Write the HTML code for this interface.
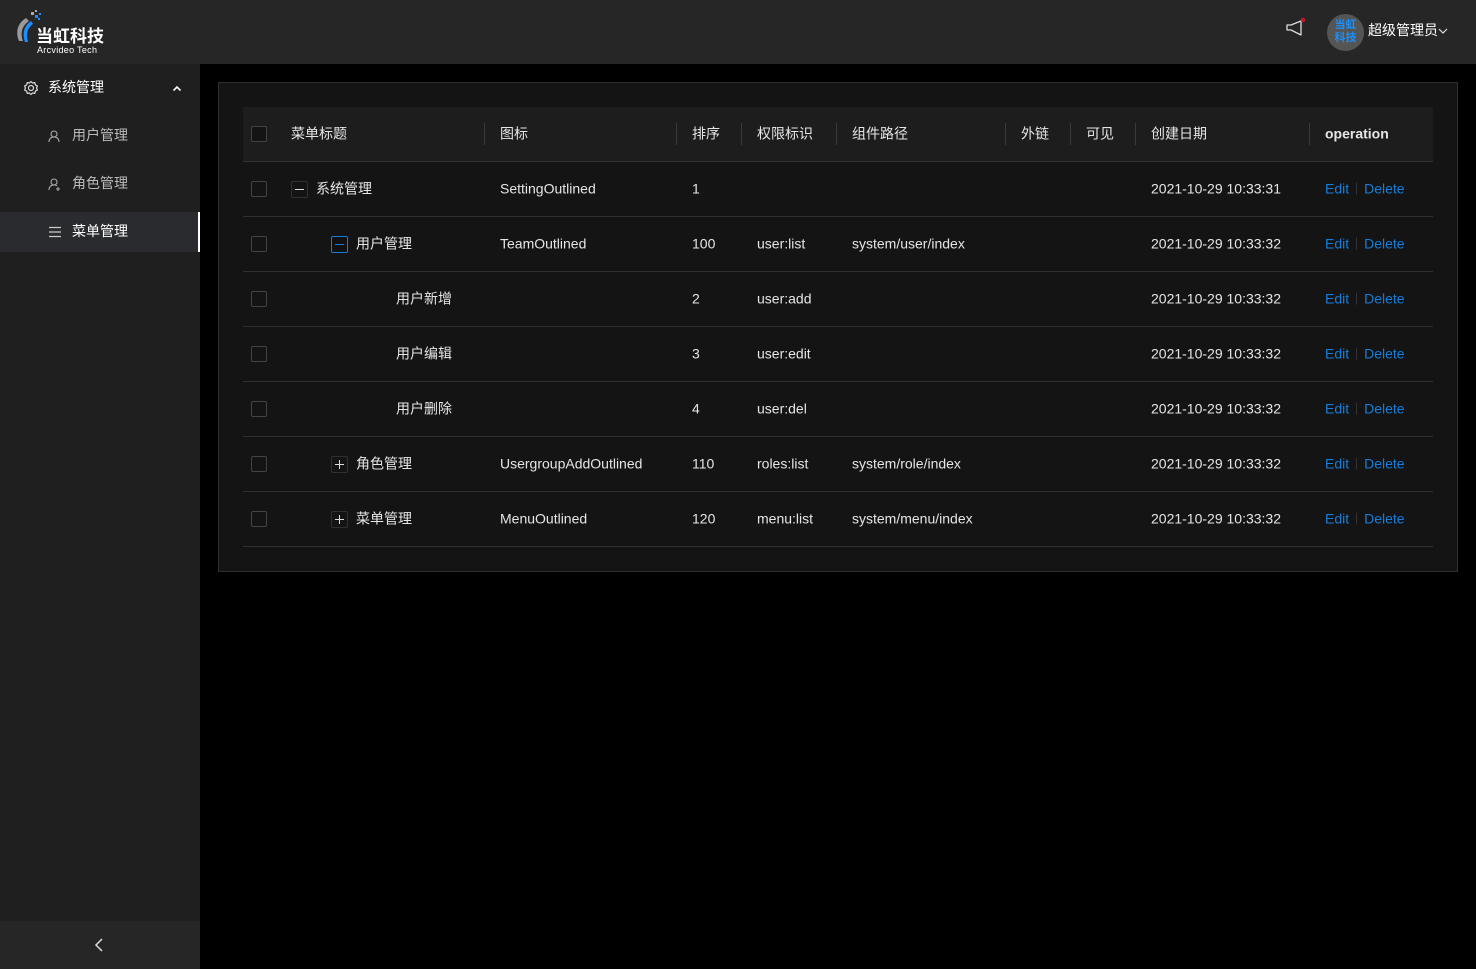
<!DOCTYPE html><html><head><meta charset="utf-8"><style>
*{margin:0;padding:0;box-sizing:border-box}
body{width:1476px;height:969px;background:#000;font-family:"Liberation Sans","Noto Sans CJK SC",sans-serif;font-size:14px;color:#e6e6e6;position:relative;overflow:hidden}
.a{position:absolute;white-space:nowrap;line-height:1.2}
.cb{position:absolute;left:8px;width:16px;height:16px;border:1px solid #434343;border-radius:2px;background:#141414}
.row{position:absolute;left:243px;width:1190px;height:55px;border-bottom:1px solid #303030}
.row .a{top:50%;transform:translateY(-50%)}
.row .cb{top:19px}
.div{position:absolute;top:16px;width:1px;height:22px;background:#3a3a3a}
.lk{color:#177ddc}
.sep{display:inline-block;width:1px;height:12px;background:#333;margin:0 7px;vertical-align:-1px}
.exp{position:absolute;top:19px;width:17px;height:17px;border:1px solid #303030;border-radius:2px;background:#141414}
.exp:before{content:"";position:absolute;left:3px;top:7px;width:9px;height:1px;background:#ddd}
.exp.p:after{content:"";position:absolute;left:7px;top:3px;width:1px;height:9px;background:#ddd}
.exp.b{border-color:#177ddc;background:#111}
.exp.b:before{background:#177ddc}
</style></head><body>
<div class="a" style="left:0;top:0;width:1476px;height:64px;background:#262626"></div>
<svg class="a" style="left:14px;top:8px" width="34" height="40" viewBox="0 0 34 40"><path d="M12 10 C4 15 1 23 5 33 L9 33 C6 25 8 18 15 13Z" fill="#999"/><path d="M17 13 C10 18 8 25 11 34 L14 34 C12 26 13 20 19 16Z" fill="#1890ff"/><rect x="17" y="4" width="3" height="3" fill="#aaa"/><rect x="21" y="7" width="3" height="3" fill="#1890ff"/><rect x="25" y="5" width="2" height="2" fill="#1890ff"/><rect x="21" y="2" width="2" height="2" fill="#aaa"/><rect x="24" y="10" width="2" height="2" fill="#1890ff"/></svg>
<div class="a" style="left:36px;top:27px;font-size:17px;line-height:20px;color:#fff;font-weight:bold">当虹科技</div>
<div class="a" style="left:37px;top:45px;font-size:9px;line-height:10px;color:#fff;letter-spacing:0.3px">Arcvideo Tech</div>
<svg class="a" style="left:1284px;top:16px" width="22" height="22" viewBox="0 0 22 22"><path d="M3 9 L3 14 L7 14 L17 19 L17 5 L7 9Z" fill="none" stroke="#ddd" stroke-width="1.3" stroke-linejoin="round"/><circle cx="19" cy="4" r="2.3" fill="#c0192a"/></svg>
<div class="a" style="left:1327px;top:14px;width:37px;height:37px;border-radius:50%;background:#555;color:#1890ff;font-size:11px;font-weight:bold;text-align:center;line-height:13px;padding-top:5px">当虹<br>科技</div>
<div class="a" style="left:1368px;top:22px;font-size:14px;color:#fff">超级管理员</div>
<svg class="a" style="left:1438px;top:27px" width="10" height="8" viewBox="0 0 10 8"><path d="M1 2 L5 6 L9 2" fill="none" stroke="#ddd" stroke-width="1.2"/></svg>
<div class="a" style="left:0;top:64px;width:200px;height:857px;background:#1f1f1f"></div>
<div class="a" style="left:0;top:921px;width:200px;height:48px;background:#262626"></div>
<svg class="a" style="left:94px;top:938px" width="10" height="14" viewBox="0 0 10 14"><path d="M8 1 L2 7 L8 13" fill="none" stroke="#ddd" stroke-width="1.5"/></svg>
<svg class="a" style="left:23px;top:80px" width="16" height="16" viewBox="0 0 16 16"><circle cx="8" cy="8" r="2.5" fill="none" stroke="#ddd" stroke-width="1.2"/><path d="M8 1.5 L9.5 3 L11.8 2.6 L12.3 4.8 L14.4 6 L13.5 8 L14.4 10 L12.3 11.2 L11.8 13.4 L9.5 13 L8 14.5 L6.5 13 L4.2 13.4 L3.7 11.2 L1.6 10 L2.5 8 L1.6 6 L3.7 4.8 L4.2 2.6 L6.5 3Z" fill="none" stroke="#ddd" stroke-width="1.2" stroke-linejoin="round"/></svg>
<div class="a" style="left:48px;top:79px;color:#fff">系统管理</div>
<svg class="a" style="left:172px;top:85px" width="10" height="7" viewBox="0 0 10 7"><path d="M1.5 5.5 L5 2 L8.5 5.5" fill="none" stroke="#fff" stroke-width="1.6"/></svg>
<svg class="a" style="left:48px;top:129px" width="14" height="14" viewBox="0 0 14 14"><circle cx="6" cy="5" r="3" fill="none" stroke="#aaa" stroke-width="1.1"/><path d="M1 13 C1 9 4 8 6 8 C8 8 11 9 11 13" fill="none" stroke="#aaa" stroke-width="1.1"/></svg>
<div class="a" style="left:72px;top:127px;color:#bbb">用户管理</div>
<svg class="a" style="left:48px;top:177px" width="14" height="14" viewBox="0 0 14 14"><circle cx="6" cy="5" r="3" fill="none" stroke="#aaa" stroke-width="1.1"/><path d="M1 13 C1 9 4 8 6 8 C7 8 8 8.3 9 8.8 M10 10 L10 14 M8 12 L12 12" fill="none" stroke="#aaa" stroke-width="1.1"/></svg>
<div class="a" style="left:72px;top:175px;color:#bbb">角色管理</div>
<div class="a" style="left:0;top:212px;width:200px;height:40px;background:#2a2b2e;border-right:2px solid #fff"></div>
<svg class="a" style="left:48px;top:226px" width="14" height="12" viewBox="0 0 14 12"><path d="M1 1.5 H13 M1 6 H13 M1 10.5 H13" stroke="#ccc" stroke-width="1.3"/></svg>
<div class="a" style="left:72px;top:223px;color:#fff">菜单管理</div>
<div class="a" style="left:218px;top:82px;width:1240px;height:490px;background:#141414;border:1px solid #303030"></div>
<div class="row" style="top:107px;height:55px;background:#1d1d1d">
<div class="cb"></div>
<div class="a" style="left:48px">菜单标题</div>
<div class="div" style="left:241px"></div><div class="a" style="left:257px">图标</div>
<div class="div" style="left:433px"></div><div class="a" style="left:449px">排序</div>
<div class="div" style="left:498px"></div><div class="a" style="left:514px">权限标识</div>
<div class="div" style="left:593px"></div><div class="a" style="left:609px">组件路径</div>
<div class="div" style="left:762px"></div><div class="a" style="left:778px">外链</div>
<div class="div" style="left:827px"></div><div class="a" style="left:843px">可见</div>
<div class="div" style="left:892px"></div><div class="a" style="left:908px">创建日期</div>
<div class="div" style="left:1066px"></div><div class="a" style="left:1082px;font-weight:bold">operation</div>
</div>
<div class="row" style="top:162px"><div class="cb"></div><div class="exp" style="left:48px"></div><div class="a" style="left:73px">系统管理</div><div class="a" style="left:257px">SettingOutlined</div><div class="a" style="left:449px">1</div><div class="a" style="left:908px">2021-10-29 10:33:31</div><div class="a" style="left:1082px"><span class="lk">Edit</span><span class="sep"></span><span class="lk">Delete</span></div></div>
<div class="row" style="top:217px"><div class="cb"></div><div class="exp b" style="left:88px"></div><div class="a" style="left:113px">用户管理</div><div class="a" style="left:257px">TeamOutlined</div><div class="a" style="left:449px">100</div><div class="a" style="left:514px">user:list</div><div class="a" style="left:609px">system/user/index</div><div class="a" style="left:908px">2021-10-29 10:33:32</div><div class="a" style="left:1082px"><span class="lk">Edit</span><span class="sep"></span><span class="lk">Delete</span></div></div>
<div class="row" style="top:272px"><div class="cb"></div><div class="a" style="left:153px">用户新增</div><div class="a" style="left:449px">2</div><div class="a" style="left:514px">user:add</div><div class="a" style="left:908px">2021-10-29 10:33:32</div><div class="a" style="left:1082px"><span class="lk">Edit</span><span class="sep"></span><span class="lk">Delete</span></div></div>
<div class="row" style="top:327px"><div class="cb"></div><div class="a" style="left:153px">用户编辑</div><div class="a" style="left:449px">3</div><div class="a" style="left:514px">user:edit</div><div class="a" style="left:908px">2021-10-29 10:33:32</div><div class="a" style="left:1082px"><span class="lk">Edit</span><span class="sep"></span><span class="lk">Delete</span></div></div>
<div class="row" style="top:382px"><div class="cb"></div><div class="a" style="left:153px">用户删除</div><div class="a" style="left:449px">4</div><div class="a" style="left:514px">user:del</div><div class="a" style="left:908px">2021-10-29 10:33:32</div><div class="a" style="left:1082px"><span class="lk">Edit</span><span class="sep"></span><span class="lk">Delete</span></div></div>
<div class="row" style="top:437px"><div class="cb"></div><div class="exp p" style="left:88px"></div><div class="a" style="left:113px">角色管理</div><div class="a" style="left:257px">UsergroupAddOutlined</div><div class="a" style="left:449px">110</div><div class="a" style="left:514px">roles:list</div><div class="a" style="left:609px">system/role/index</div><div class="a" style="left:908px">2021-10-29 10:33:32</div><div class="a" style="left:1082px"><span class="lk">Edit</span><span class="sep"></span><span class="lk">Delete</span></div></div>
<div class="row" style="top:492px"><div class="cb"></div><div class="exp p" style="left:88px"></div><div class="a" style="left:113px">菜单管理</div><div class="a" style="left:257px">MenuOutlined</div><div class="a" style="left:449px">120</div><div class="a" style="left:514px">menu:list</div><div class="a" style="left:609px">system/menu/index</div><div class="a" style="left:908px">2021-10-29 10:33:32</div><div class="a" style="left:1082px"><span class="lk">Edit</span><span class="sep"></span><span class="lk">Delete</span></div></div>
</body></html>
